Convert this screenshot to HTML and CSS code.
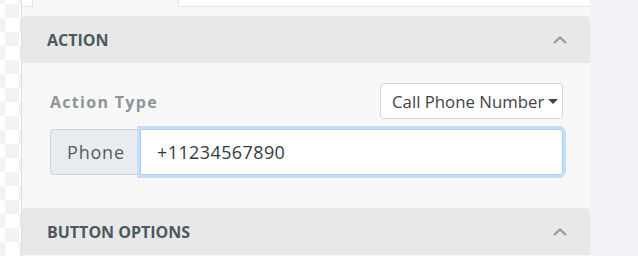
FILE: index.html
```html
<!DOCTYPE html>
<html>
<head>
<meta charset="utf-8">
<link rel="stylesheet" href="styles.css">
</head>
<body>
<div class="page">
  <div class="canvas"></div>
  <div class="panel">
    <div class="tabs">
      <div class="tab-edge"></div>
      <div class="tab-active"></div>
      <div class="tab-rest"></div>
    </div>
    <section class="section">
      <header class="section-head">
        <span class="section-title">ACTION</span>
        <svg class="chevron" width="16" height="10" viewBox="0 0 16 10"><path d="M2 8 L8 2.5 L14 8" fill="none" stroke="#9a9a9a" stroke-width="2.2"/></svg>
      </header>
      <div class="section-body">
        <div class="row">
          <label class="field-label">Action Type</label>
          <button class="dropdown">Call Phone Number<span class="caret"></span></button>
        </div>
        <div class="input-group">
          <span class="addon">Phone</span>
          <input class="phone-input" type="text" value="+11234567890">
        </div>
      </div>
    </section>
    <section class="section">
      <header class="section-head">
        <span class="section-title">BUTTON OPTIONS</span>
        <svg class="chevron" width="16" height="10" viewBox="0 0 16 10"><path d="M2 8 L8 2.5 L14 8" fill="none" stroke="#9a9a9a" stroke-width="2.2"/></svg>
      </header>
    </section>
  </div>
  <div class="gutter"></div>
</div>
</body>
</html>
```
FILE: styles.css
```css
* { box-sizing: border-box; }
html, body { margin: 0; padding: 0; }
body {
  font-family: "Open Sans", "Noto Sans", sans-serif;
  width: 638px;
  height: 256px;
  overflow: hidden;
  background: #f1f3f8;
}
.page {
  display: flex;
  height: 256px;
  overflow: hidden;
}
.canvas {
  width: 22px;
  flex: none;
  border-right: 1px solid #dcdcdc;
  background-color: #ffffff;
  background-image: conic-gradient(#f3f3f3 25%, #ffffff 0 50%, #f3f3f3 0 75%, #ffffff 0);
  background-size: 28px 28px;
  background-position: -9px 4px;
}
.panel {
  width: 568px;
  flex: none;
  background: #f8f8f8;
  display: flex;
  flex-direction: column;
}
.gutter {
  flex: 1;
  background: #f1f3f8;
}
.tabs {
  display: flex;
  height: 7px;
  flex: none;
}
.tab-edge {
  width: 11px;
  background: #ffffff;
  border-bottom: 1px solid #e6e6e6;
  border-right: 1px solid #e6e6e6;
}
.tab-active {
  width: 145px;
  background: #f8f8f8;
}
.tab-rest {
  flex: 1;
  background: #ffffff;
  border-bottom: 1px solid #e6e6e6;
  border-left: 1px solid #e6e6e6;
}
.section:first-of-type { margin-top: 9px; }
.section-head {
  height: 47px;
  background: #e8e8e8;
  border-radius: 4px 4px 0 0;
  display: flex;
  align-items: center;
  justify-content: space-between;
  padding: 0 22px 0 25px;
}
.section-title {
  font-weight: 700;
  font-size: 16px;
  color: #4a5a5f;
  letter-spacing: 0;
}
.chevron { display: block; }
.section-body {
  padding: 20px 27px 33px 28px;
  background: #f8f8f8;
}
.row {
  display: flex;
  align-items: center;
  justify-content: space-between;
  height: 36px;
}
.field-label {
  font-weight: 700;
  font-size: 16px;
  letter-spacing: 1.3px;
  color: #8d9497;
  padding-top: 2px;
}
.dropdown {
  height: 36px;
  width: 183px;
  background: #ffffff;
  border: 1px solid #d6d6d6;
  border-radius: 4px;
  font-family: "Open Sans", "Noto Sans", sans-serif;
  font-size: 16.8px;
  color: #3f4347;
  padding: 0 0 0 11px;
  display: flex;
  align-items: center;
  gap: 4px;
}
.caret {
  width: 0;
  height: 0;
  border-left: 5px solid transparent;
  border-right: 5px solid transparent;
  border-top: 5px solid #3f4347;
}
.input-group {
  margin-top: 10px;
  display: flex;
  height: 46px;
}
.addon {
  display: flex;
  align-items: center;
  width: 90px;
  flex: none;
  padding: 0 0 0 16px;
  background: #e9ecef;
  border: 1px solid #ced4da;
  border-right: none;
  border-radius: 4px 0 0 4px;
  font-size: 18px;
  letter-spacing: 0.8px;
  color: #555b60;
}
.phone-input {
  flex: 1;
  min-width: 0;
  height: 46px;
  background: #ffffff;
  border: 1px solid #a9cff5;
  border-radius: 0 4px 4px 0;
  box-shadow: 0 0 0 3px #c3def9;
  outline: none;
  padding: 0 0 0 16px;
  font-family: "Open Sans", "Noto Sans", sans-serif;
  font-size: 18px;
  letter-spacing: 0.4px;
  color: #343a40;
}
```
